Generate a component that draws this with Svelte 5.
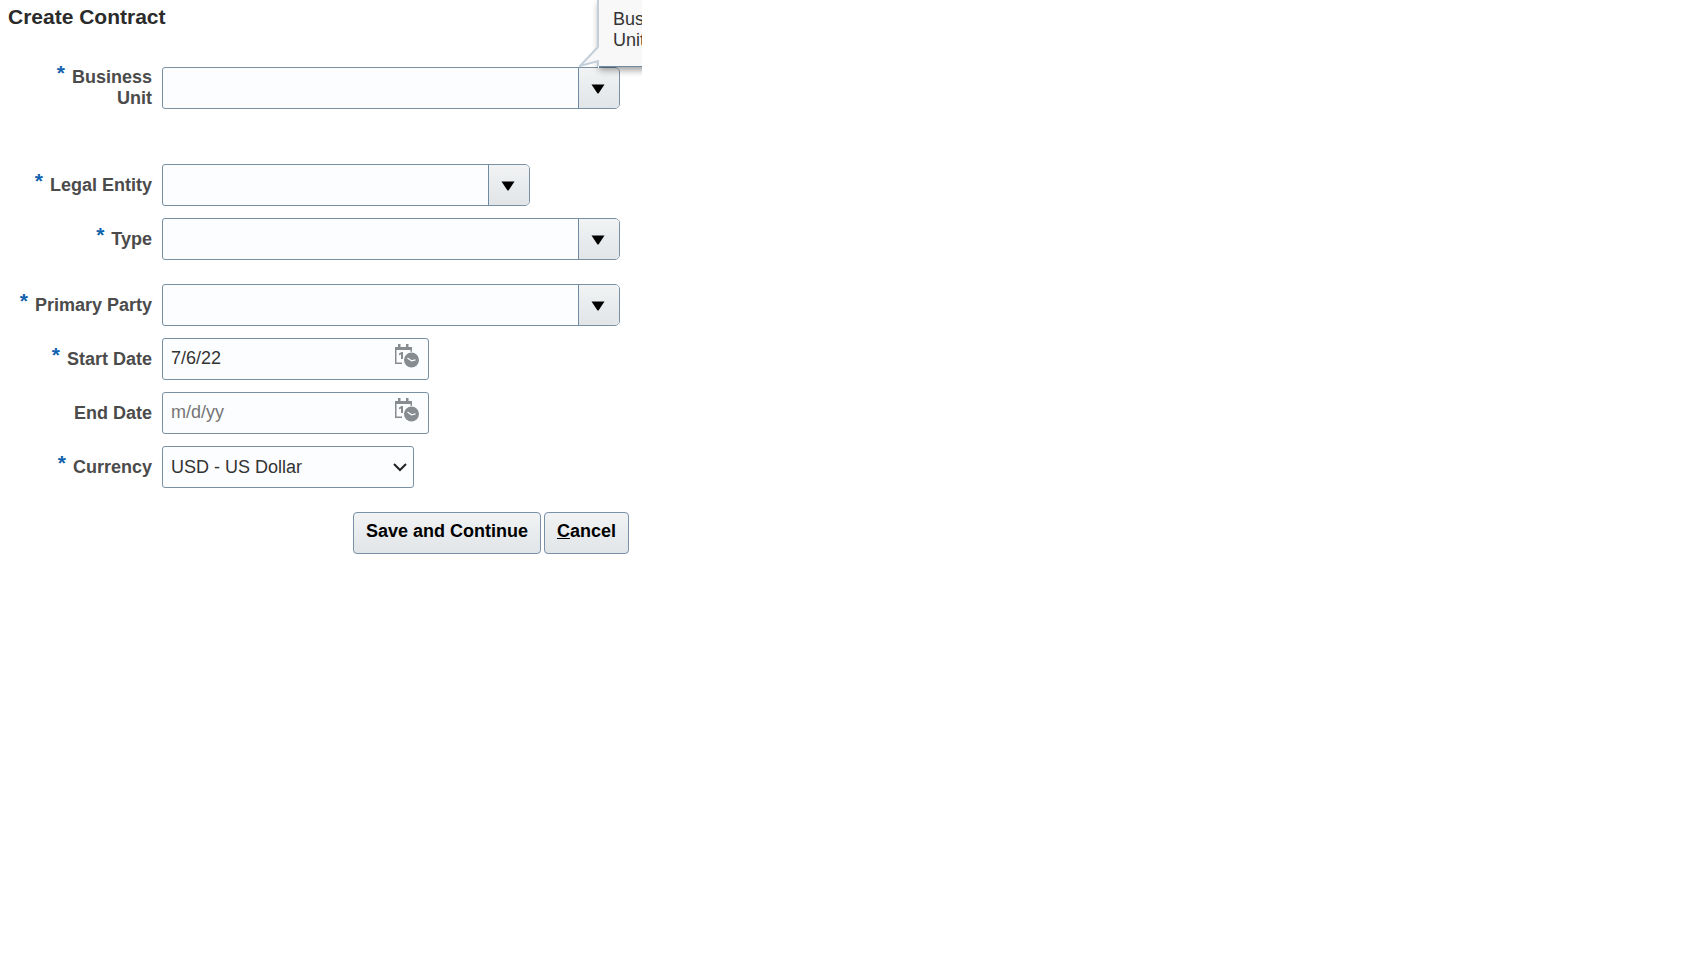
<script lang="ts">
  type Field = {
    id: string;
    label: string;
    kind: "combo" | "date" | "select";
    required?: boolean;
    narrow?: boolean;
    short?: boolean;
    space?: "wide" | "medium";
    placeholder?: string;
  };

  const fields: Field[] = [
    { id: "business-unit", label: "Business Unit", kind: "combo", required: true, narrow: true, space: "wide" },
    { id: "legal-entity", label: "Legal Entity", kind: "combo", required: true, short: true },
    { id: "type", label: "Type", kind: "combo", required: true, space: "medium" },
    { id: "primary-party", label: "Primary Party", kind: "combo", required: true },
    { id: "start-date", label: "Start Date", kind: "date", required: true },
    { id: "end-date", label: "End Date", kind: "date", placeholder: "m/d/yy" },
    { id: "currency", label: "Currency", kind: "select", required: true },
  ];

  let values: Record<string, string> = $state({
    "business-unit": "",
    "legal-entity": "",
    type: "",
    "primary-party": "",
    "start-date": "7/6/22",
    "end-date": "",
    currency: "USD",
  });
</script>

<main class="dialog">
  <h1>Create Contract</h1>

  <form onsubmit={(e) => e.preventDefault()}>
    {#each fields as field (field.id)}
      <div class="row {field.space ?? ''}">
        <label for={field.id} class:narrow={field.narrow}>
          {#if field.required}<span class="star">*</span>{/if}
          <span class="text">{field.label}</span>
        </label>

        {#if field.kind === "combo"}
          <div class="control combo" class:short={field.short}>
            <input id={field.id} type="text" bind:value={values[field.id]} />
            <button type="button" class="drop" aria-label="Search {field.label}">
              <svg width="14" height="10" viewBox="0 0 14 10"><path d="M0.5 0.5h13L7.500 9.500h-1z" /></svg>
            </button>
          </div>
        {:else if field.kind === "date"}
          <div class="control date">
            <input
              id={field.id}
              type="text"
              placeholder={field.placeholder}
              bind:value={values[field.id]}
            />
            <button type="button" class="picker" aria-label="Select {field.label}">
              <svg width="24" height="24" viewBox="0 0 24 24">
                <path d="M0 3h17v5h-1.500V6H1.500v12.500H7V20H0z" />
                <path d="M3 0h2.500v4H3zM11 0h2.500v4H11z" />
                <path d="M4 9.500L6.500 8H8v7H6v-4.500l-2 .8z" />
                <circle cx="16.500" cy="16" r="8.300" fill="#fcfdfe" />
                <circle cx="16.500" cy="16" r="7.500" />
                <path d="M12.500 14l4 2.800 4-1" fill="none" stroke="#fcfdfe" stroke-width="1.200" />
              </svg>
            </button>
          </div>
        {:else}
          <div class="control select">
            <select id={field.id} bind:value={values[field.id]}>
              <option value="USD">USD - US Dollar</option>
            </select>
            <svg class="chevron" width="14" height="9" viewBox="0 0 14 9">
              <path d="M1 1l6 6 6-6" fill="none" stroke="#222" stroke-width="2" />
            </svg>
          </div>
        {/if}
      </div>
    {/each}

    <div class="actions">
      <button type="submit" class="btn">Save and Continue</button>
      <button type="button" class="btn"><u>C</u>ancel</button>
    </div>
  </form>

  <div class="hint" role="tooltip">
    <svg class="tail" width="20" height="22" viewBox="0 0 20 22">
      <path d="M20 1L1 20l18-5v7h1z" fill="#f8f8f8" />
      <path d="M19 1L1 20l18-5v5" fill="none" stroke="#c3cfda" stroke-width="2" />
    </svg>
    Business<br />Unit
  </div>
</main>

<style>
  :global(body) {
    background: #fff;
  }

  .dialog {
    position: relative;
    box-sizing: border-box;
    max-width: 642px;
    padding: 5px 13px 8px 8px;
    overflow: hidden;
    font-family: "Liberation Sans", Arial, sans-serif;
    font-size: 18px;
    line-height: 21px;
    color: #333;
  }

  h1 {
    margin: 0 0 38px;
    font-size: 21px;
    line-height: 24px;
    color: #2b2b2b;
  }

  .row {
    display: grid;
    grid-template-columns: 144px 1fr;
    column-gap: 10px;
    align-items: center;
    margin-bottom: 12px;
  }

  .row.medium {
    margin-bottom: 24px;
  }

  .row.wide {
    margin-bottom: 55px;
  }

  label {
    display: flex;
    justify-content: flex-end;
    align-items: flex-start;
    gap: 7px;
    font-weight: bold;
    text-align: right;
    color: #4b4b4b;
  }

  .narrow .text {
    width: min-content;
  }

  .star {
    font-size: 21px;
    line-height: 12px;
    color: #0f62ae;
  }

  .control {
    display: flex;
    box-sizing: border-box;
    height: 42px;
    border: 1px solid #7890a2;
    border-radius: 3px;
    background: #fcfdfe;
  }

  .combo {
    max-width: 458px;
    border-radius: 3px 5px 5px 3px;
  }

  .combo.short {
    max-width: 368px;
  }

  .date {
    max-width: 267px;
  }

  .select {
    position: relative;
    max-width: 252px;
  }

  input,
  select {
    flex: 1;
    min-width: 0;
    box-sizing: border-box;
    margin: 0;
    padding: 0 8px;
    border: none;
    border-radius: 3px;
    outline: none;
    background: transparent;
    font: inherit;
    color: #333;
  }

  input {
    padding-bottom: 2px;
  }

  input::placeholder {
    color: #757575;
    opacity: 1;
  }

  select {
    appearance: none;
  }

  .chevron {
    position: absolute;
    right: 6px;
    top: 16px;
    pointer-events: none;
  }

  button {
    margin: 0;
    font: inherit;
    cursor: pointer;
  }

  .drop {
    display: flex;
    align-items: center;
    justify-content: center;
    width: 41px;
    padding: 2px 3px 0 0;
    border: none;
    border-left: 1px solid #6f8ba3;
    border-radius: 0 4px 4px 0;
    background: linear-gradient(#f1f3f4, #e1e5e8);
  }

  .picker {
    display: flex;
    align-items: flex-start;
    padding: 5px 9px 0 0;
    border: none;
    background: transparent;
    fill: #878c90;
  }

  .actions {
    display: flex;
    justify-content: flex-end;
    gap: 3px;
    margin-top: 24px;
  }

  .btn {
    height: 42px;
    padding: 0 12px 3px;
    border: 1px solid #7890a8;
    border-radius: 4px;
    background: linear-gradient(#f1f3f4, #e1e5e8);
    font-weight: bold;
    color: #000;
  }

  .hint {
    position: absolute;
    top: 0;
    left: 597px;
    box-sizing: border-box;
    width: 110px;
    height: 67px;
    padding: 9px 0 0 14px;
    border-left: 2px solid #c3cfda;
    border-bottom: 1px solid #6f8ba3;
    background: #f8f8f8;
    box-shadow: 2px 3px 7px rgba(0, 0, 0, 0.4);
  }

  .tail {
    position: absolute;
    left: -20px;
    bottom: -2px;
  }
</style>
